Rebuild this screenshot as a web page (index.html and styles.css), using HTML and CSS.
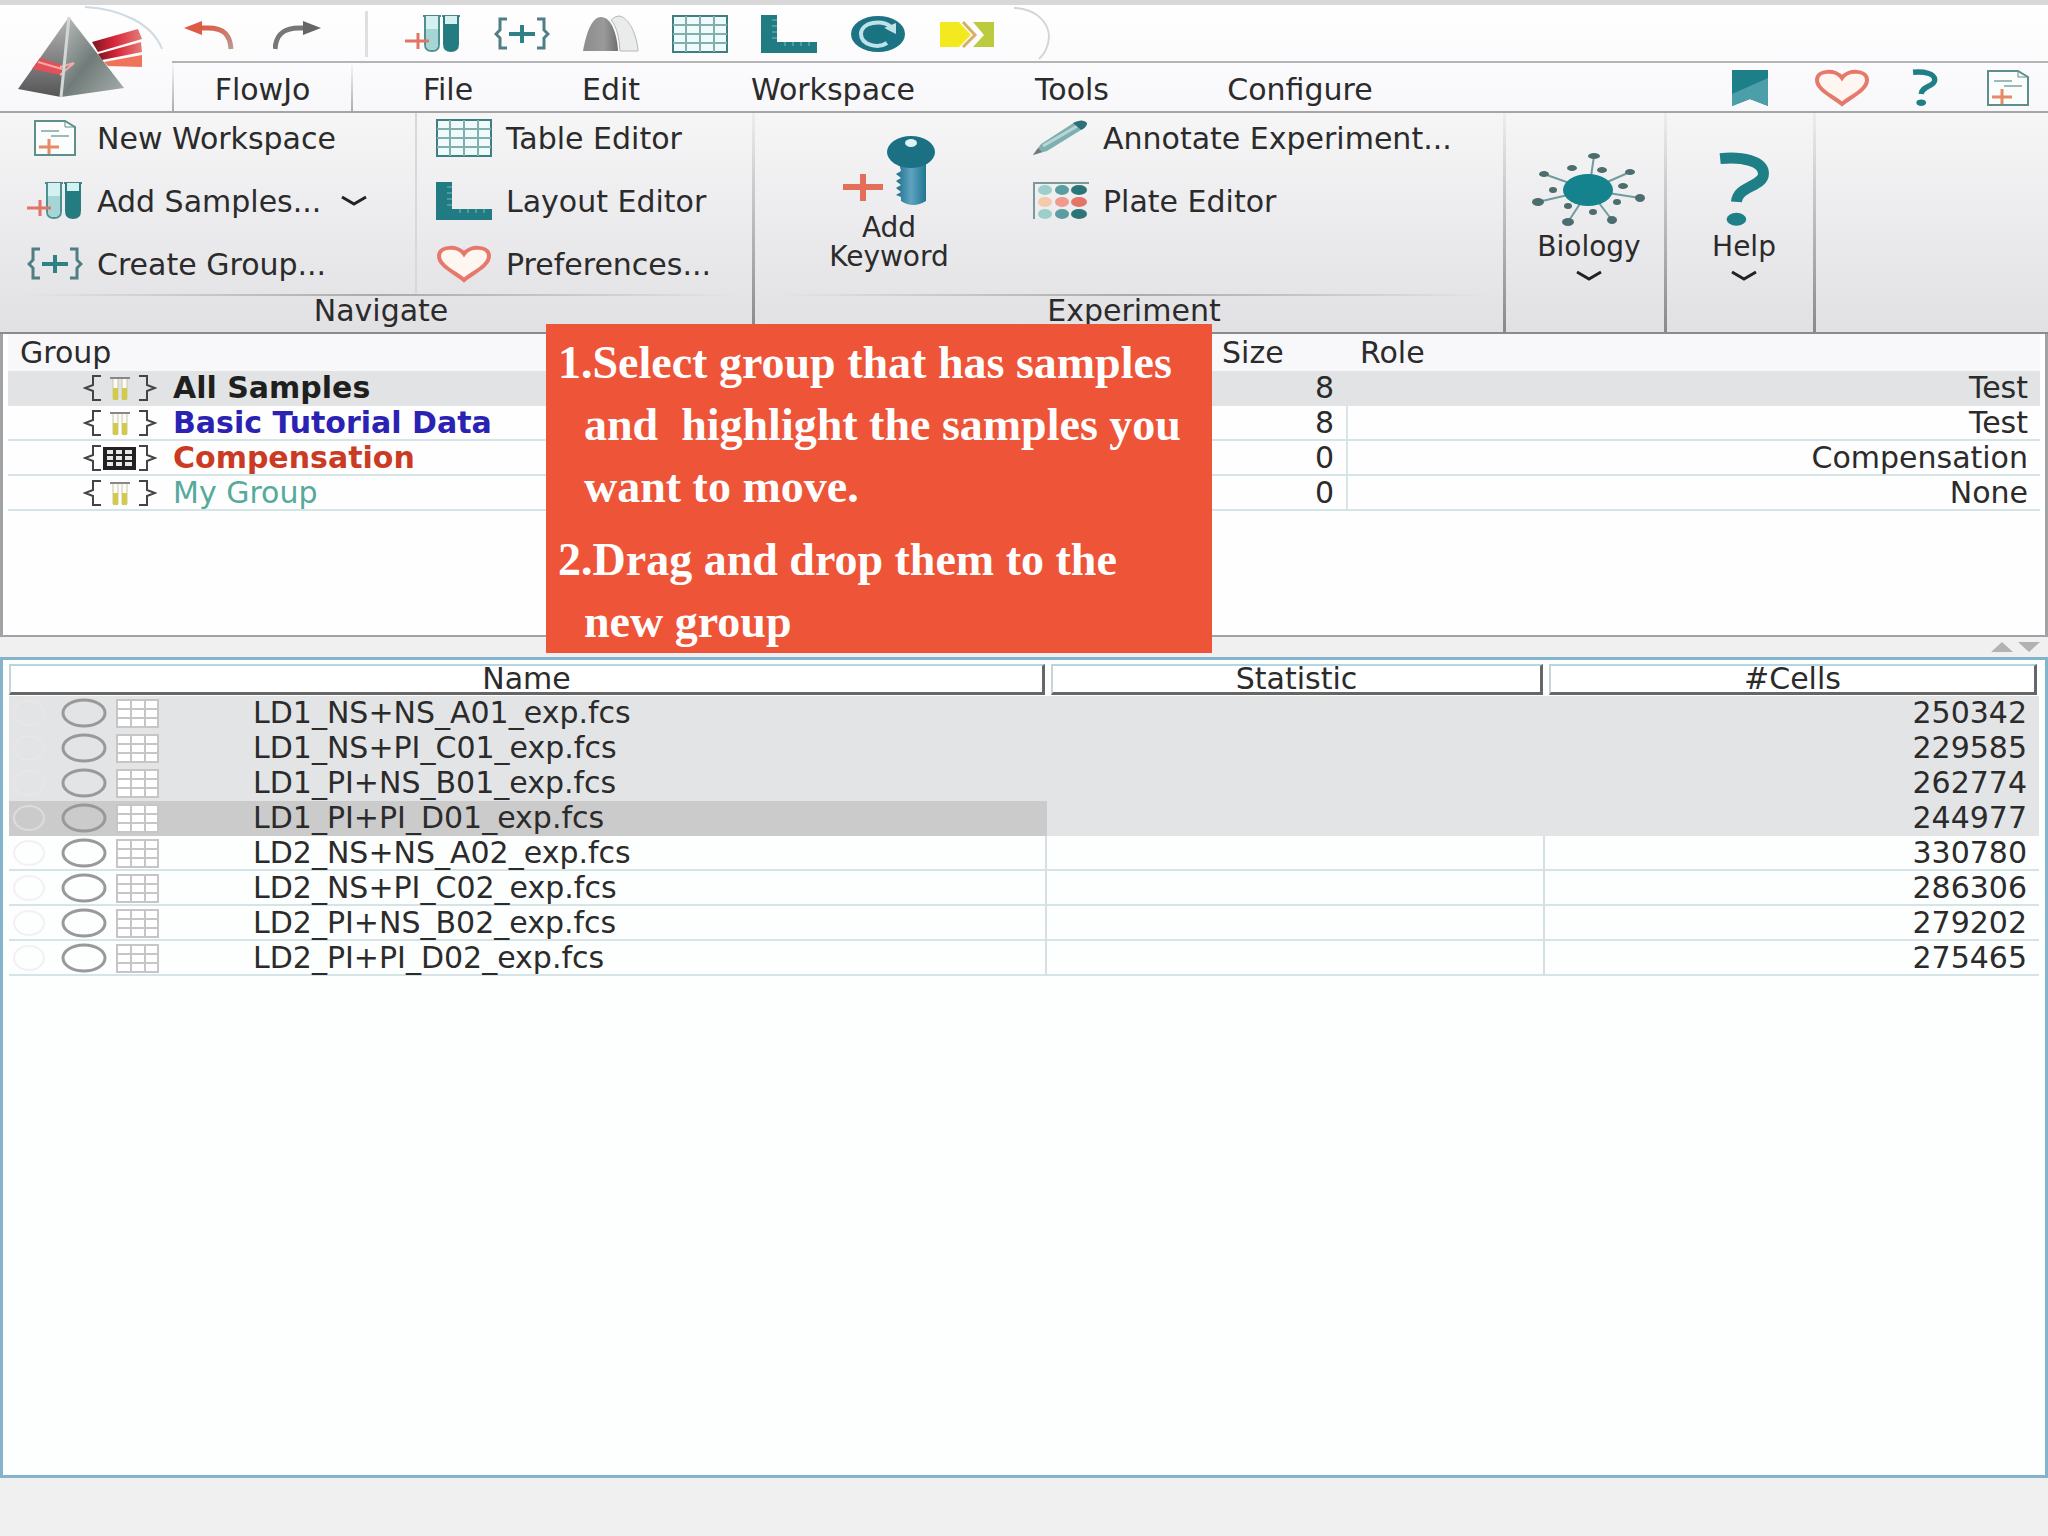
FILE: index.html
```html
<!DOCTYPE html>
<html lang="en">
<head>
<meta charset="utf-8">
<title>FlowJo Workspace</title>
<link rel="stylesheet" href="styles.css">
</head>
<body>
<svg class="defs" aria-hidden="true">
  <defs>
    <linearGradient id="steel" x1="0" y1="0" x2="1" y2="1">
      <stop offset="0" stop-color="#bdc0bf"/><stop offset=".5" stop-color="#707c79"/><stop offset="1" stop-color="#a9b0ae"/>
    </linearGradient>
    <linearGradient id="steel-dark" x1="0" y1="0" x2="0" y2="1">
      <stop offset="0" stop-color="#b5b5b5"/><stop offset="1" stop-color="#555"/>
    </linearGradient>
    <linearGradient id="beam" x1="0" y1="0" x2="1" y2="0">
      <stop offset="0" stop-color="#7d1520"/><stop offset=".45" stop-color="#d8283a"/><stop offset="1" stop-color="#e57c78"/>
    </linearGradient>
    <linearGradient id="undo-fade" x1="0" y1="0" x2="1" y2="1">
      <stop offset="0" stop-color="#e2563f"/><stop offset="1" stop-color="#b99a94"/>
    </linearGradient>
    <linearGradient id="hill" x1="0" y1="0" x2="1" y2="0">
      <stop offset="0" stop-color="#8c8c8c"/><stop offset=".6" stop-color="#9a9a9a"/><stop offset="1" stop-color="#6f6f6f"/>
    </linearGradient>
    <linearGradient id="shaft" x1="0" y1="0" x2="1" y2="0">
      <stop offset="0" stop-color="#1b6f8a"/><stop offset=".5" stop-color="#5fa3c0"/><stop offset="1" stop-color="#1f7690"/>
    </linearGradient>
  </defs>
  <symbol id="i-doc" viewBox="0 0 56 38">
    <path d="M8 2H38L48 8V36H8Z" fill="#fbfdfc" stroke="#5f8f8b" stroke-width="2"/>
    <path d="M38 2V8H48" fill="none" stroke="#5f8f8b" stroke-width="1"/>
    <path d="M14 12H32M24 17H42" stroke="#9dbab8" stroke-width="2"/>
    <path d="M12 28H32M22 20V35" stroke="#e58a66" stroke-width="3"/>
  </symbol>
  <symbol id="i-tubes" viewBox="0 0 56 38">
    <path d="M18 1H36M37 1H55" stroke="#4e8588" stroke-width="2"/>
    <path d="M20 1V29Q20 36 27 36T34 29V1" fill="#d3f1f0" stroke="#4e9090" stroke-width="2"/>
    <path d="M21 14H33V29Q33 35 27 35T21 29Z" fill="#a5d6d5"/>
    <path d="M39 1V29Q39 36 46 36T53 29V1" fill="#d3f1f0" stroke="#2c7c80" stroke-width="2"/>
    <path d="M39 9H53V29Q53 36 46 36T39 29Z" fill="#257c80"/>
    <path d="M0 26H24M13 18V34" stroke="#e07466" stroke-width="3"/>
  </symbol>
  <symbol id="i-group" viewBox="0 0 56 38">
    <path d="M13 4H6V15L2 19L6 23V33H13M43 4H50V15L54 19L50 23V33H43" fill="none" stroke="#4f7f85" stroke-width="3"/>
    <path d="M15 19H41M28 10V28" stroke="#2f8186" stroke-width="4"/>
  </symbol>
  <symbol id="i-grid" viewBox="0 0 56 38">
    <rect x="1" y="1" width="54" height="36" fill="#effafa" stroke="#3f7f82" stroke-width="2"/>
    <path d="M1 10H55M1 19H55M1 28H55M14 1V37M28 1V37M42 1V37" stroke="#82aeb0" stroke-width="2"/>
  </symbol>
  <symbol id="i-ruler" viewBox="0 0 56 38">
    <path d="M0 0H16V27H56V38H0Z" fill="#217b82"/>
    <path d="M11 5H16M11 11H16M11 17H16M11 23H16M24 27V31M32 27V31M40 27V31M48 27V31" stroke="#7fb9bd" stroke-width="1"/>
  </symbol>
  <symbol id="i-heart" viewBox="0 0 56 38">
    <path d="M28 35C20 28 3 21 3 11C3 1 22 0 28 9C34 0 53 1 53 11C53 21 36 28 28 35Z" fill="#fff6f2" stroke="#e5796b" stroke-width="4"/>
  </symbol>
  <symbol id="i-help" viewBox="0 0 48 68">
    <path d="M2 5C22 3 42 7 42 19C42 31 18 30 17 45" fill="none" stroke="#1f7f86" stroke-width="10"/>
    <ellipse cx="17" cy="61" rx="9" ry="6" fill="#1f7f86"/>
  </symbol>
  <symbol id="i-chevron" viewBox="0 0 26 12">
    <path d="M1 2L13 9L25 2" fill="none" stroke="#222" stroke-width="3"/>
  </symbol>
  <symbol id="i-braces" viewBox="0 0 74 26">
    <path d="M18 1H10V10L2 13L10 16V25H18M56 1H64V10L72 13L64 16V25H56" fill="none" stroke="#444" stroke-width="2"/>
  </symbol>
  <symbol id="i-gtubes" viewBox="0 0 74 26">
    <use href="#i-braces"/>
    <path d="M27 3H47" stroke="#888" stroke-width="2"/>
    <path d="M30 4V24H35V4M39 4V24H44V4" fill="#fffdf0" stroke="#c9c7b4" stroke-width="1"/>
    <path d="M30 13H35V25H30ZM39 13H44V25H39Z" fill="#d3c94a"/>
  </symbol>
  <symbol id="i-gmatrix" viewBox="0 0 74 26">
    <use href="#i-braces"/>
    <rect x="20" y="2" width="33" height="23" fill="#222"/>
    <path d="M24 5h6v4h-6zM33 5h6v4h-6zM42 5h7v4h-7zM24 11h6v4h-6zM33 11h6v4h-6zM42 11h7v4h-7zM24 17h6v4h-6zM33 17h6v4h-6zM42 17h7v4h-7z" fill="#e8e8e8"/>
  </symbol>
  <symbol id="i-sample" viewBox="0 0 150 33">
    <ellipse cx="20" cy="17" rx="15" ry="12" fill="none" stroke="#ece6ea" stroke-opacity=".6" stroke-width="2"/>
    <ellipse cx="75" cy="17" rx="21" ry="13" fill="none" stroke="#999" stroke-width="3"/>
    <rect x="108" y="4" width="41" height="27" fill="#fff" stroke="#c6c6c6" stroke-width="2"/>
    <path d="M108 13H149M108 22H149M122 4V31M136 4V31" stroke="#c6c6c6" stroke-width="2"/>
  </symbol>
</svg>

<header class="top">
  <button class="logo" aria-label="FlowJo menu">
    <svg width="172" height="106" viewBox="0 0 172 106">
      <path d="M85 2C120 4 152 18 162 44" fill="none" stroke="#cfdae2" stroke-width="2"/>
      <path d="M92 37L138 24L142 34L98 47Z" fill="url(#beam)"/>
      <path d="M98 49L141 37L142 47L102 55Z" fill="url(#beam)"/>
      <path d="M104 57L142 50V62L108 61Z" fill="#ee7358"/>
      <path d="M69 12L18 84L61 92Z" fill="url(#steel-dark)"/>
      <path d="M69 12L61 92L124 83Z" fill="url(#steel)"/>
      <path d="M40 53L62 60L61 70L32 64Z" fill="#e2505a"/>
      <path d="M38 57L62 64M60 62L74 58L60 70" stroke="#f7a9a6" stroke-width="2" fill="none"/>
      <path d="M69 12L61 92" stroke="#d3d8d6" stroke-width="3"/>
    </svg>
  </button>
  <div class="quick">
    <button aria-label="Undo"><svg width="56" height="38" viewBox="0 0 56 38"><path d="M12 13H24C40 13 46 20 47 34" fill="none" stroke="url(#undo-fade)" stroke-width="5"/><path d="M0 13L18 6V20Z" fill="#dd5a45"/></svg></button>
    <button aria-label="Redo"><svg width="56" height="38" viewBox="0 0 56 38"><path d="M36 13H26C10 13 3 20 2 34" fill="none" stroke="#777" stroke-width="5"/><path d="M48 13L30 6V20Z" fill="#666"/></svg></button>
    <span class="bar"></span>
    <button aria-label="Add samples"><svg width="56" height="38"><use href="#i-tubes"/></svg></button>
    <button aria-label="Create group"><svg width="56" height="38"><use href="#i-group"/></svg></button>
    <button aria-label="Compare populations"><svg width="56" height="38" viewBox="0 0 56 38"><path d="M0 36C4 14 10 2 18 2C28 2 34 18 35 36Z" fill="url(#hill)"/><path d="M28 5Q32 1 36 1C46 2 54 20 55 36H37C36 22 34 12 28 5Z" fill="#e9eceb" stroke="#b4b8b7" stroke-width="1"/></svg></button>
    <button aria-label="Table editor"><svg width="56" height="38"><use href="#i-grid"/></svg></button>
    <button aria-label="Layout editor"><svg width="56" height="38"><use href="#i-ruler"/></svg></button>
    <button aria-label="Refresh"><svg width="56" height="38" viewBox="0 0 56 38"><ellipse cx="28" cy="19" rx="27" ry="18" fill="#1c7384"/><path d="M41 12C32 4 11 7 11 19C11 30 28 34 37 28" fill="none" stroke="#bde3e8" stroke-width="4"/><path d="M34 13L46 8V19Z" fill="#bde3e8"/><ellipse cx="29" cy="19" rx="10" ry="7" fill="#187580"/></svg></button>
    <button aria-label="Continue"><svg width="56" height="38" viewBox="0 0 56 38"><path d="M1 7H20L32 20L20 32H1Z" fill="#f2ea1f"/><path d="M24 7L36 20L24 32" fill="none" stroke="#d8ae6a" stroke-width="3"/><path d="M34 7H55V32H34L45 20Z" fill="#bccb3e"/></svg></button>
    <svg class="curve" width="40" height="54" viewBox="0 0 40 54"><path d="M1 1C24 2 36 16 36 30Q35 44 26 52" fill="none" stroke="#d5d5d8" stroke-width="2"/></svg>
  </div>
  <div class="tabrow">
    <nav class="tabs">
      <a class="on" href="#flowjo">FlowJo</a><a href="#file">File</a><a href="#edit">Edit</a><a href="#workspace">Workspace</a><a href="#tools">Tools</a><a href="#configure">Configure</a>
    </nav>
    <div class="side">
      <button aria-label="Bookmark"><svg width="40" height="38" viewBox="8 0 40 38"><path d="M8 1H44V37L26 30L8 37Z" fill="#1d7f88"/><path d="M8 25L44 9V37L26 30L8 37Z" fill="#4c9fa8"/></svg></button>
      <button aria-label="Preferences"><svg width="56" height="38"><use href="#i-heart"/></svg></button>
      <button aria-label="Help"><svg width="26" height="38"><use href="#i-help"/></svg></button>
      <button aria-label="New workspace"><svg width="56" height="38"><use href="#i-doc"/></svg></button>
    </div>
  </div>
</header>

<main class="work">
  <section class="ribbon">
    <div class="band">
      <div class="tools nav-tools">
        <div class="stack">
          <button><svg width="56" height="38"><use href="#i-doc"/></svg>New Workspace</button>
          <button><svg width="56" height="38"><use href="#i-tubes"/></svg>Add Samples...<svg class="chev" width="26" height="12"><use href="#i-chevron"/></svg></button>
          <button><svg width="56" height="38"><use href="#i-group"/></svg>Create Group...</button>
        </div>
        <div class="stack second">
          <button><svg width="56" height="38"><use href="#i-grid"/></svg>Table Editor</button>
          <button><svg width="56" height="38"><use href="#i-ruler"/></svg>Layout Editor</button>
          <button><svg width="56" height="38"><use href="#i-heart"/></svg>Preferences...</button>
        </div>
      </div>
      <h2>Navigate</h2>
    </div>
    <div class="band">
      <div class="tools exp-tools">
        <button class="big keyword">
          <svg width="100" height="72" viewBox="0 0 100 72">
            <path d="M4 52H44M24 39V66" stroke="#e36f5a" stroke-width="6"/>
            <path d="M60 28H87V66Q74 74 62 66V62L57 60L62 57L57 53L62 50L57 46L62 43L57 39L62 36Z" fill="url(#shaft)"/>
            <ellipse cx="72" cy="17" rx="24" ry="16" fill="#1b7183"/>
            <ellipse cx="72" cy="8" rx="6" ry="4" fill="#dff2f3"/>
          </svg>
          <span>Add<br>Keyword</span>
        </button>
        <div class="stack">
          <button><svg width="56" height="38" viewBox="0 0 56 38"><path d="M0 36L8 25L42 3Q50 0 54 4Q54 8 48 11L14 32Z" fill="#7fb0b0"/><path d="M10 27L46 6" stroke="#b9d6d5" stroke-width="3"/><path d="M0 36L5 29L9 33Z" fill="#777"/><path d="M40 4Q50 -1 54 4Q54 8 48 11Z" fill="#2d7176"/></svg>Annotate Experiment...</button>
          <button><svg width="56" height="38" viewBox="0 0 56 38"><path d="M1 37V1H56" fill="none" stroke="#7d9898" stroke-width="2"/><g fill="#9ccfcc"><ellipse cx="12" cy="8" rx="7" ry="5"/><ellipse cx="12" cy="32" rx="7" ry="5"/></g><g fill="#5a9da0"><ellipse cx="29" cy="8" rx="7" ry="5"/><ellipse cx="29" cy="32" rx="7" ry="5"/></g><g fill="#2b7579"><ellipse cx="46" cy="8" rx="8" ry="5"/><ellipse cx="46" cy="32" rx="8" ry="5"/></g><ellipse cx="12" cy="20" rx="7" ry="5" fill="#f5c9ac"/><ellipse cx="29" cy="20" rx="7" ry="5" fill="#ee9a8c"/><ellipse cx="46" cy="20" rx="8" ry="5" fill="#e27468"/></svg>Plate Editor</button>
        </div>
      </div>
      <h2>Experiment</h2>
    </div>
    <div class="band">
      <button class="big menu">
        <svg width="114" height="76" viewBox="0 0 114 76">
          <path d="M57 38L62 4M57 38L98 20M57 38L108 46M57 38L80 68M57 38L36 70M57 38L6 50M57 38L12 22" stroke="#6f9c9e" stroke-width="2"/>
          <g fill="#4c6c6d"><ellipse cx="62" cy="4" rx="6" ry="3"/><ellipse cx="98" cy="20" rx="5" ry="3"/><ellipse cx="108" cy="46" rx="5" ry="4"/><ellipse cx="80" cy="68" rx="5" ry="4"/><ellipse cx="36" cy="70" rx="6" ry="4"/><ellipse cx="6" cy="50" rx="6" ry="4"/><ellipse cx="12" cy="22" rx="5" ry="3"/><ellipse cx="40" cy="16" rx="5" ry="3"/><ellipse cx="70" cy="18" rx="5" ry="3"/><ellipse cx="91" cy="34" rx="5" ry="3"/><ellipse cx="85" cy="50" rx="4" ry="3"/><ellipse cx="61" cy="60" rx="4" ry="3"/><ellipse cx="36" cy="54" rx="4" ry="3"/><ellipse cx="21" cy="38" rx="4" ry="3"/></g>
          <ellipse cx="56" cy="38" rx="25" ry="16" fill="#14838d"/>
        </svg>
        Biology
        <svg class="drop" width="26" height="12"><use href="#i-chevron"/></svg>
      </button>
    </div>
    <div class="band">
      <button class="big menu">
        <svg width="52" height="76"><use href="#i-help"/></svg>
        Help
        <svg class="drop" width="26" height="12"><use href="#i-chevron"/></svg>
      </button>
    </div>
  </section>

  <section class="groups">
    <table>
      <colgroup><col class="g-name"><col class="g-size"><col class="g-role"></colgroup>
      <thead><tr><th>Group</th><th>Size</th><th>Role</th></tr></thead>
      <tbody>
        <tr class="sel"><td class="all"><svg width="74" height="26"><use href="#i-gtubes"/></svg>All Samples</td><td>8</td><td>Test</td></tr>
        <tr><td class="basic"><svg width="74" height="26"><use href="#i-gtubes"/></svg>Basic Tutorial Data</td><td>8</td><td>Test</td></tr>
        <tr><td class="comp"><svg width="74" height="26"><use href="#i-gmatrix"/></svg>Compensation</td><td>0</td><td>Compensation</td></tr>
        <tr><td class="mine"><svg width="74" height="26"><use href="#i-gtubes"/></svg>My Group</td><td>0</td><td>None</td></tr>
      </tbody>
    </table>
  </section>

  <aside class="callout">
    <p>1.Select group that has samples<br>and&nbsp; highlight the samples you<br>want to move.</p>
    <p>2.Drag and drop them to the<br>new group</p>
  </aside>
</main>

<div class="splitter"><svg width="50" height="10" viewBox="0 0 50 10"><path d="M0 10L11 0L22 10ZM27 0H49L38 10Z" fill="#b3b1b1"/></svg></div>

<section class="samples">
  <table>
    <colgroup><col class="s-name"><col class="s-stat"><col class="s-cells"></colgroup>
    <thead><tr><th><div>Name</div></th><th><div>Statistic</div></th><th><div>#Cells</div></th></tr></thead>
    <tbody>
      <tr class="sel"><td><svg width="150" height="33"><use href="#i-sample"/></svg>LD1_NS+NS_A01_exp.fcs</td><td></td><td>250342</td></tr>
      <tr class="sel"><td><svg width="150" height="33"><use href="#i-sample"/></svg>LD1_NS+PI_C01_exp.fcs</td><td></td><td>229585</td></tr>
      <tr class="sel"><td><svg width="150" height="33"><use href="#i-sample"/></svg>LD1_PI+NS_B01_exp.fcs</td><td></td><td>262774</td></tr>
      <tr class="sel focus"><td><svg width="150" height="33"><use href="#i-sample"/></svg>LD1_PI+PI_D01_exp.fcs</td><td></td><td>244977</td></tr>
      <tr><td><svg width="150" height="33"><use href="#i-sample"/></svg>LD2_NS+NS_A02_exp.fcs</td><td></td><td>330780</td></tr>
      <tr><td><svg width="150" height="33"><use href="#i-sample"/></svg>LD2_NS+PI_C02_exp.fcs</td><td></td><td>286306</td></tr>
      <tr><td><svg width="150" height="33"><use href="#i-sample"/></svg>LD2_PI+NS_B02_exp.fcs</td><td></td><td>279202</td></tr>
      <tr><td><svg width="150" height="33"><use href="#i-sample"/></svg>LD2_PI+PI_D02_exp.fcs</td><td></td><td>275465</td></tr>
    </tbody>
  </table>
</section>
<footer class="status"></footer>
</body>
</html>
```
FILE: styles.css
```css
* { box-sizing: border-box; }

body {
  margin: 0;
  min-height: 100vh;
  display: flex;
  flex-direction: column;
  background: #f1f0f0;
  color: #2b2b2b;
  font: 30px/35px "DejaVu Sans", sans-serif;
}

button {
  font: inherit;
  color: inherit;
  background: none;
  border: 0;
  padding: 0;
  cursor: pointer;
}

svg { display: block; flex: none; }
.defs { position: absolute; width: 0; height: 0; }

/* Quick access bar and tabs */
.top {
  display: grid;
  grid-template-columns: 172px 1fr;
  grid-template-rows: 58px 48px;
  border-top: 5px solid #d8d8d8;
  border-bottom: 2px solid #a5a5a7;
  background: linear-gradient(#fff, #f8f7fa);
}
.logo { grid-row: 1 / 3; }
.quick {
  display: flex;
  align-items: center;
  gap: 33px;
  padding: 2px 0 0 12px;
  border-bottom: 2px solid #b5b5b7;
}
.quick .bar {
  width: 3px;
  height: 46px;
  margin: 0 4px 0 3px;
  background: #dfdfe1;
}
.curve { margin-left: -15px; }
.tabrow {
  display: flex;
  justify-content: space-between;
}
.tabs {
  display: grid;
  grid-template-columns: 181px 190px 136px 308px 170px 286px;
}
.tabs a {
  display: grid;
  place-items: center;
  padding-top: 4px;
  color: inherit;
  text-decoration: none;
}
.tabs .on {
  border: solid;
  border-width: 0 2px;
  border-image: linear-gradient(#fafafa, #aaa) 1;
}
.side {
  display: flex;
  align-items: center;
  gap: 42px;
  padding: 2px 12px 0 0;
}

/* Ribbon */
.work { position: relative; }
.ribbon {
  display: grid;
  grid-template-columns: 755fr 751fr 161fr 149fr 232fr;
  height: 221px;
  border-bottom: 2px solid #8b8b8d;
  background: linear-gradient(#f6f6f7, #e1e0e3);
}
.band {
  display: flex;
  flex-direction: column;
  border-right: 3px solid;
  border-image: linear-gradient(#eee, #88888a) 1;
}
.tools { display: flex; height: 181px; }
.nav-tools { padding-left: 27px; }
.stack {
  display: flex;
  flex-direction: column;
  gap: 19px;
  padding-top: 3px;
}
.stack button {
  display: flex;
  align-items: center;
  gap: 14px;
  height: 44px;
  white-space: nowrap;
}
.nav-tools .stack:first-child { width: 388px; }
.nav-tools .second { padding-left: 19px; border-left: 2px solid #d8d8dc; }
.chev { margin-left: 6px; }
.band h2 {
  margin: 0 18px 0 28px;
  border-top: 2px solid;
  border-image: linear-gradient(90deg, #e4e4e6, #aaa 50%, #e4e4e6) 1;
  font: inherit;
  line-height: 30px;
  text-align: center;
}
.big {
  display: flex;
  flex-direction: column;
  align-items: center;
  font-size: 28px;
  line-height: 29px;
}
.keyword { width: 264px; padding-top: 22px; gap: 6px; }
.exp-tools { gap: 12px; padding-left: 2px; }
.menu { padding: 39px 0 0 8px; gap: 4px; }
.drop { margin-top: 5px; }

/* Group list */
table {
  width: 100%;
  border-collapse: separate;
  border-spacing: 0;
  table-layout: fixed;
}
th { font-weight: normal; text-align: left; padding: 0; }
td { height: 35px; padding: 0; line-height: 33px; white-space: nowrap; }
.groups {
  min-height: 303px;
  padding: 0 5px;
  border: solid #a2a2a6;
  border-width: 0 3px 2px;
  background: #fefefe;
}
.g-name { width: 1202px; }
.g-size { width: 138px; }
.groups th { height: 37px; padding: 0 12px; background: #f8f7fa; }
.groups td { border-bottom: 2px solid #d5e4e6; text-align: right; padding-right: 12px; }
.groups td:nth-child(2) { border-right: 2px solid #dbe4e6; }
.groups td:first-child {
  display: flex;
  align-items: center;
  gap: 16px;
  padding-left: 75px;
}
.groups .sel td { background: #e2e3e4; border-color: #e2e3e4; }
.all, .basic, .comp { font-weight: bold; }
.all { color: #1f1f1f; }
.basic { color: #2b22b4; }
.comp { color: #cb3a22; }
.mine { color: #55aa9c; }

/* Instruction note over the lists */
.callout {
  position: absolute;
  top: 211px;
  left: 546px;
  width: 666px;
  padding: 8px 0 0 38px;
  background: #ee5438;
  color: #fff;
  font: bold 46px/62px "Liberation Serif", serif;
  white-space: nowrap;
}
.callout p { margin: 0 0 11px; text-indent: -26px; }
.callout p:last-child { margin: 0; }

.splitter {
  display: flex;
  justify-content: flex-end;
  align-items: center;
  height: 20px;
  padding-right: 7px;
}

/* Sample list */
.samples {
  flex: 1;
  padding: 4px 6px 0;
  border: 3px solid #84b4cc;
  background: #fdfefe;
}
.s-name { width: 1038px; }
.s-stat { width: 498px; }
.samples th { padding: 0 2px 1px 4px; vertical-align: top; }
.samples th:first-child { padding-left: 0; }
.samples th div {
  height: 31px;
  border: solid;
  border-width: 2px 3px 3px 2px;
  border-color: #b4d6e0 #666 #666 #c8d4d8;
  background: #fff;
  line-height: 26px;
  text-align: center;
}
.samples td { border-bottom: 2px solid #d5e4e6; border-right: 2px solid #d5e0e4; }
.samples td:first-child { display: flex; align-items: center; gap: 94px; }
.samples td:last-child { text-align: right; padding-right: 12px; border-right: 0; }
.samples .sel td { background: #e3e4e5; border-color: #e3e4e5; }
.samples .focus td:first-child { background: #cbcbcc; border-color: #cbcbcc; }
.status { height: 58px; }
```
